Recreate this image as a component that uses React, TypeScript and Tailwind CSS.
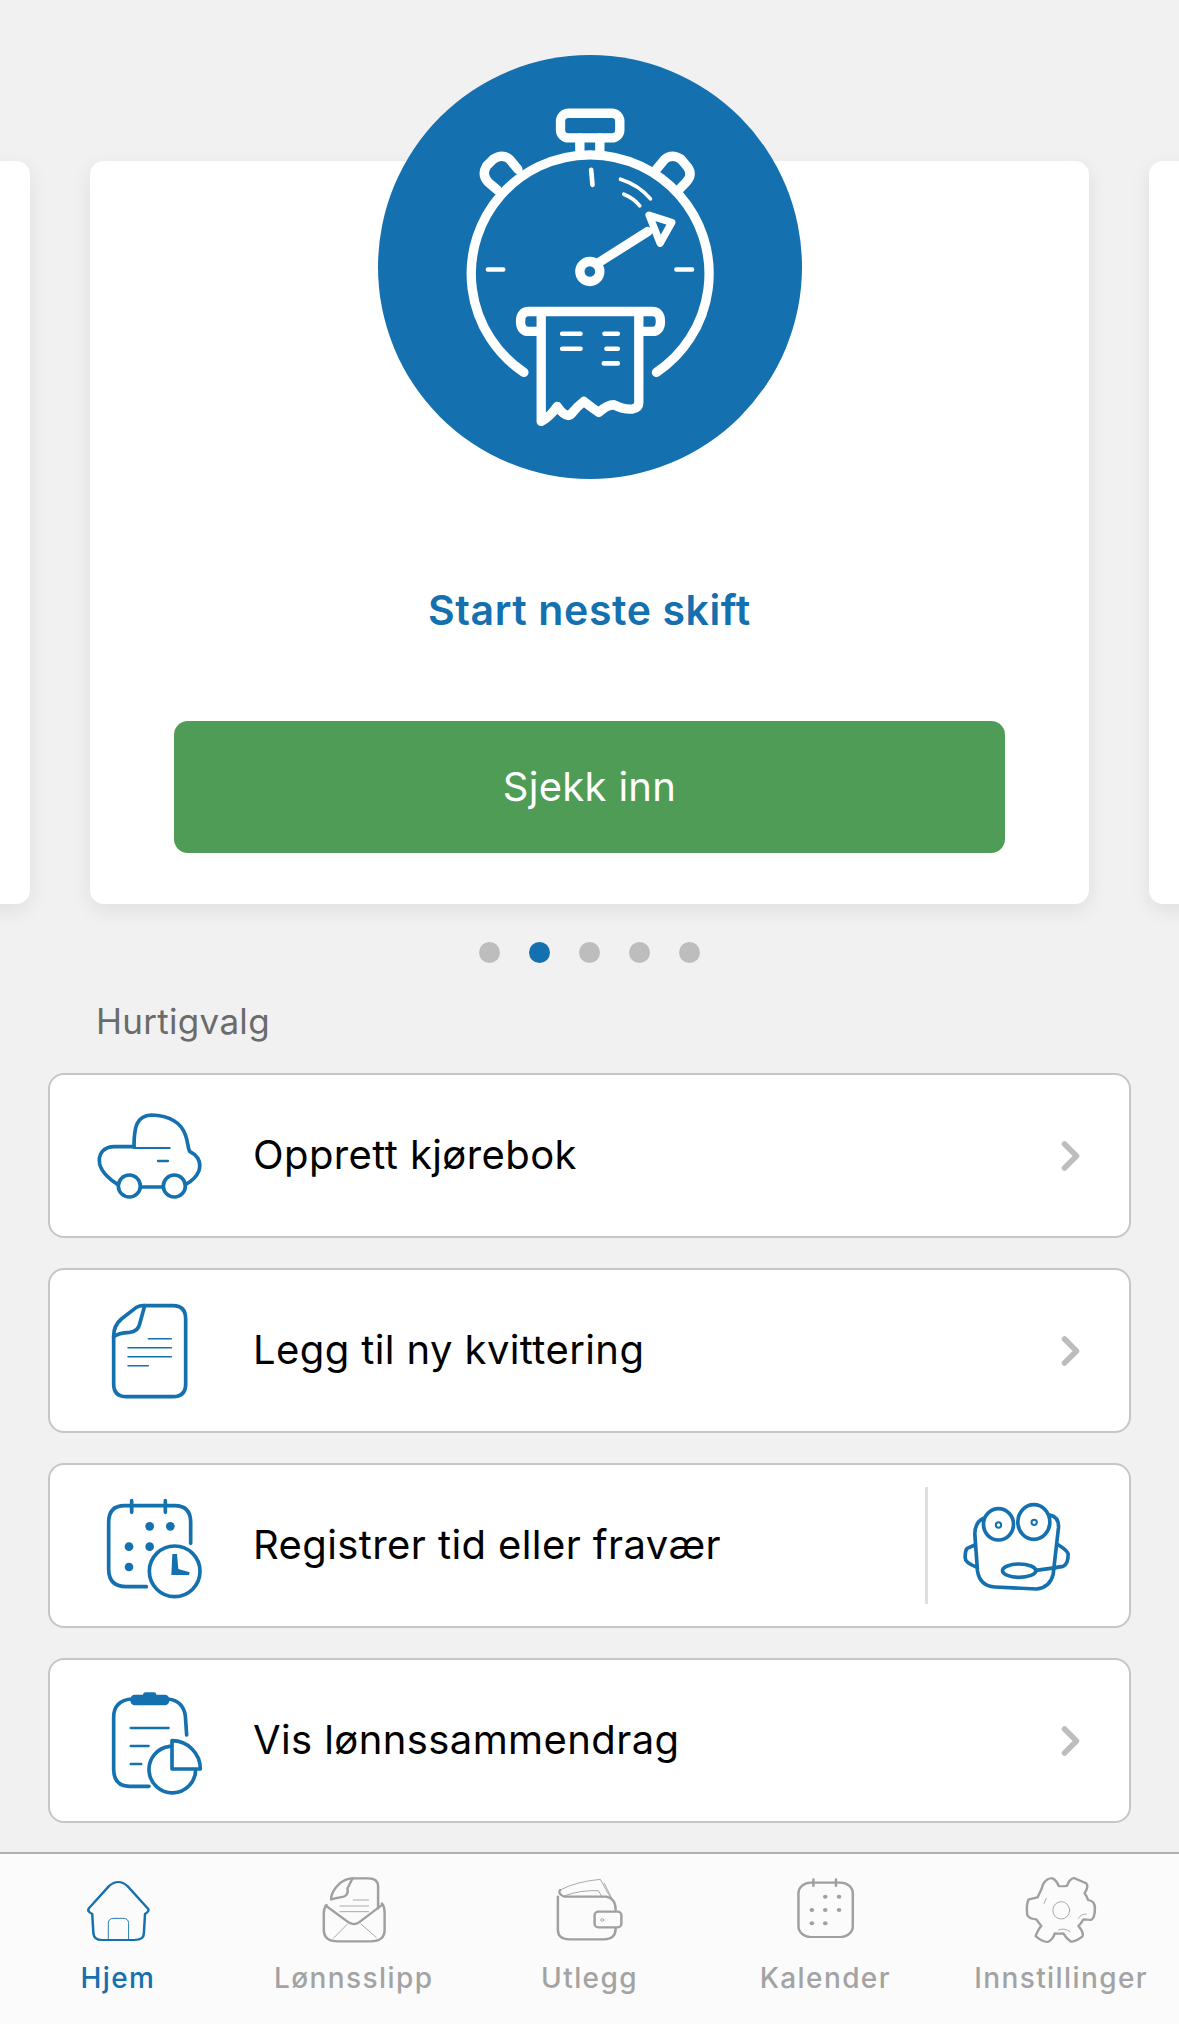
import React from "react";

const BLUE = "#1470ae";
const GREY = "#a0a0a0";

const Stopwatch = () => (
  <svg viewBox="52 45 1273 1273" className="w-[424px] h-[424px]" fill="none" stroke="white" strokeWidth={28} strokeLinecap="round" strokeLinejoin="round">
    <rect x="600" y="220" width="178" height="74" rx="24" />
    <path d="M658 294V335M718 294V335" />
    <path d="M490 998A357 357 0 1 1 888 998" />
    <path d="M472 388L447 358Q425 340 398 358L378 378Q362 405 383 427L410 450" />
    <path d="M888 388L913 358Q935 340 962 358L982 382Q998 405 977 427L955 450" />
    <path d="M692 390L696 435M382 689H428M948 689H995" strokeWidth={14} />
    <path d="M780 418Q835 435 870 477M790 463Q820 475 838 498" strokeWidth={11} />
    <circle cx="688" cy="695" r="30" />
    <path d="M712 670L862 575" />
    <path d="M866 526L934 548L899 610Z" strokeWidth={22} />
    <path d="M530 875H505Q480 875 480 845Q480 815 505 815H875Q900 815 900 845Q900 875 875 875H850" />
    <path d="M542 820V1145Q565 1135 590 1100Q615 1135 630 1125Q650 1100 670 1085Q695 1105 715 1118Q740 1095 760 1095Q790 1110 815 1108Q835 1105 835 1090V820" />
    <path d="M605 882H660M732 882H772M605 927H660M738 927H772M730 971H772" strokeWidth={14} />
  </svg>
);

// row icons are traced at 3x, all with the same box
const RowIcon = ({ children }: { children: React.ReactNode }) => (
  <svg viewBox="130 106 360 360" className="w-[120px] h-[120px] shrink-0 ml-[33px]" fill="none" stroke={BLUE} strokeWidth={11} strokeLinecap="round" strokeLinejoin="round">
    {children}
  </svg>
);

const CarIcon = () => (
  <RowIcon>
    <path d="M283 258C283 200 290 165 335 163C390 165 425 185 438 225C445 245 445 265 450 272C475 285 485 305 478 330C470 350 455 362 440 370" />
    <path d="M283 258H225C190 258 175 280 180 310C185 335 215 360 235 372" />
    <path d="M283 262H390" strokeWidth={6} />
    <path d="M355 301H385" strokeWidth={7} />
    <circle cx="269" cy="376" r="33" />
    <circle cx="404" cy="376" r="33" />
    <path d="M303 379H369" />
  </RowIcon>
);

const DocIcon = () => (
  <RowIcon>
    <path d="M310 150H400Q438 150 438 190V385Q438 423 400 423H260Q222 423 222 385V240Q222 210 245 190L290 155Q300 150 310 150Z" />
    <path d="M222 243Q235 232 270 230Q295 228 300 205L315 150" />
    <path d="M326 249H395M265 276H395M265 303H395M265 330H326" strokeWidth={4.5} />
  </RowIcon>
);

const CalendarClockIcon = () => (
  <RowIcon>
    <path d="M453 278V215Q453 165 405 165H255Q207 165 207 215V355Q207 408 260 408H320" />
    <path d="M276 150V185M377 150V185" />
    <g fill={BLUE} stroke="none">
      <circle cx="330" cy="227" r="13" />
      <circle cx="392" cy="227" r="13" />
      <circle cx="268" cy="288" r="13" />
      <circle cx="330" cy="288" r="13" />
      <circle cx="268" cy="349" r="13" />
      <path d="M398 310L412 310L416 355L450 365L448 373L395 373Z" />
    </g>
    <circle cx="405" cy="362" r="76" />
  </RowIcon>
);

const ClipboardIcon = () => (
  <RowIcon>
    <path d="M441 268L437 210Q430 165 385 160M275 160Q222 165 222 215V370Q222 422 270 422H328" />
    <g fill={BLUE} stroke="none">
      <rect x="272" y="147" width="117" height="32" rx="14" />
      <rect x="310" y="140" width="40" height="20" rx="8" />
    </g>
    <path d="M273 247H387M273 301H327M273 355H305" strokeWidth={7} />
    <path d="M390 302A70 70 0 1 0 468 372" />
    <path d="M397 285V370H482A85 85 0 0 0 397 285Z" />
  </RowIcon>
);

const RobotIcon = () => (
  <svg viewBox="250 180 320 270" className="w-[107px] h-[90px] shrink-0 ml-[35px]" fill="none" stroke={BLUE} strokeWidth={11} strokeLinecap="round" strokeLinejoin="round">
    <path d="M310 232Q285 245 285 280L293 390Q300 435 345 438L470 444Q510 440 520 400L536 260Q538 228 510 222" />
    <ellipse cx="356" cy="250" rx="45" ry="47" />
    <ellipse cx="462" cy="243" rx="48" ry="52" />
    <circle cx="356" cy="252" r="8" strokeWidth={6} />
    <circle cx="463" cy="244" r="8" strokeWidth={6} />
    <path d="M285 312L262 322Q256 328 256 350Q256 365 290 378" />
    <path d="M536 312Q565 330 565 340Q565 370 550 376L525 380" />
    <ellipse cx="418" cy="389" rx="50" ry="20" />
    <path d="M468 388L528 380" />
  </svg>
);

const Chevron = () => (
  <svg viewBox="0 0 19 32" className="w-[19px] h-[32px] shrink-0 ml-auto mr-[49px]" fill="none" stroke="#bdbdbd" strokeWidth={5.5} strokeLinecap="round" strokeLinejoin="round">
    <path d="M3.5 4L15.5 16L3.5 28" />
  </svg>
);

// tab icons: 200x210 box of the traced crop, squeezed to real pixels
const TabIcon = ({ x, color, children }: { x: number; color: string; children: React.ReactNode }) => (
  <svg viewBox={`${x} 105 200 210`} preserveAspectRatio="none" className="w-[76.5px] h-[70px]" fill="none" stroke={color} strokeWidth={6.5} strokeLinecap="round" strokeLinejoin="round">
    {children}
  </svg>
);

const tabs = [
  {
    label: "Hjem",
    x: 208,
    icon: (
      <>
        <path d="M240 222L243 280Q245 300 265 300H350Q375 300 375 280L378 222Q392 212 385 205L332 138Q320 126 308 126Q296 126 284 138L231 205Q226 215 240 222Z" />
        <path d="M282 298V250Q282 235 297 235H320Q335 235 335 250V298" strokeWidth={2.5} />
      </>
    ),
  },
  {
    label: "Lønnsslipp",
    x: 820,
    icon: (
      <>
        <path d="M850 195Q843 205 843 220V270Q843 304 880 304H965Q1002 304 1002 270V220Q1002 200 995 190" />
        <path d="M848 197L905 245Q920 258 935 247L995 195" />
        <path d="M862 178Q862 155 885 130Q900 115 920 115H960Q985 115 985 140V205" />
        <path d="M862 178Q885 172 895 170Q908 165 905 145L918 115" />
        <path d="M920 180H960M885 198H960M885 215H960M868 295L905 252M980 292L940 252" strokeWidth={2.5} />
      </>
    ),
  },
  {
    label: "Utlegg",
    x: -74,
    icon: (
      <>
        <path d="M-56 170V270Q-56 298-25 298H65Q95 298 95 265" />
        <path d="M-50 150Q-58 160-40 170H70Q95 175 95 210" />
        <rect x="40" y="215" width="70" height="47" rx="10" />
        <circle cx="60" cy="240" r="4" strokeWidth={2.5} />
        <path d="M-50 150Q-10 125 55 118L85 180M-40 168Q0 150 50 152L60 172M65 130L85 175" strokeWidth={2.5} />
      </>
    ),
  },
  {
    label: "Kalender",
    x: 540,
    icon: (
      <>
        <rect x="570" y="128" width="142" height="163" rx="32" />
        <path d="M609 118V138M668 118V138" />
        <g fill={GREY} stroke="none">
          <circle cx="640" cy="170" r="6" />
          <circle cx="676" cy="170" r="6" />
          <circle cx="605" cy="210" r="6" />
          <circle cx="640" cy="210" r="6" />
          <circle cx="676" cy="210" r="6" />
          <circle cx="605" cy="250" r="6" />
          <circle cx="640" cy="250" r="6" />
        </g>
      </>
    ),
  },
  {
    label: "Innstillinger",
    x: 1157,
    icon: (
      <>
        <path d="M1205 148Q1210 118 1232 114Q1245 120 1250 138Q1262 140 1272 137Q1278 118 1290 114L1322 130Q1330 138 1318 160Q1325 170 1327 180Q1345 182 1345 205Q1345 235 1335 240L1315 238Q1308 252 1302 258Q1318 280 1312 290Q1295 305 1282 305Q1270 295 1262 280Q1250 282 1240 280Q1235 300 1222 306Q1205 305 1190 288Q1198 265 1205 258Q1198 248 1192 238Q1175 238 1168 225Q1165 190 1172 178L1195 172Q1200 160 1205 148Z" />
        <ellipse cx="1257" cy="211" rx="22" ry="26" strokeWidth={2.5} />
        <path d="M1218 175L1212 190M1322 222Q1308 222 1302 235M1250 270Q1265 262 1280 275" strokeWidth={2.5} />
      </>
    ),
  },
];

const Row = ({ icon, label, right }: { icon: React.ReactNode; label: string; right?: React.ReactNode }) => (
  <div className="h-[165px] flex items-center bg-white border-2 border-[#c6c6c6] rounded-[16px]">
    {icon}
    <span className="ml-[50px] mb-[2px] text-[40px] tracking-[0.4px] text-black">{label}</span>
    {right ?? <Chevron />}
  </div>
);

export default function App() {
  return (
    <div className="w-[1179px] h-[2024px] flex flex-col bg-[#f1f1f1] overflow-hidden [font-family:Inter,sans-serif]">
      <div className="flex-1 pt-[161px]">
        {/* carousel */}
        <div className="flex justify-center gap-[60px]">
          <div className="w-[999px] h-[743px] shrink-0 bg-white rounded-[14px] shadow-[0_6px_20px_rgba(0,0,0,0.08)]" />
          <div className="relative w-[999px] h-[743px] shrink-0 flex flex-col items-center pt-[425px] bg-white rounded-[14px] shadow-[0_6px_20px_rgba(0,0,0,0.08)]">
            <div className="absolute -top-[106px] left-1/2 -translate-x-1/2 w-[424px] h-[424px] rounded-full bg-[#1470ae]">
              <Stopwatch />
            </div>
            <div className="h-[48px] leading-[48px] text-[41px] tracking-[0.6px] font-semibold text-[#1470ae]">Start neste skift</div>
            <button className="mt-[87px] w-[831px] h-[132px] rounded-[14px] bg-[#4f9c56] text-white text-[40px] tracking-[0.3px]">Sjekk inn</button>
          </div>
          <div className="w-[999px] h-[743px] shrink-0 bg-white rounded-[14px] shadow-[0_6px_20px_rgba(0,0,0,0.08)]" />
        </div>

        {/* dots */}
        <div className="mt-[38px] flex justify-center gap-[29px]">
          <div className="w-[21px] h-[21px] rounded-full bg-[#bdbdbd]" />
          <div className="w-[21px] h-[21px] rounded-full bg-[#1470ae]" />
          <div className="w-[21px] h-[21px] rounded-full bg-[#bdbdbd]" />
          <div className="w-[21px] h-[21px] rounded-full bg-[#bdbdbd]" />
          <div className="w-[21px] h-[21px] rounded-full bg-[#bdbdbd]" />
        </div>

        <div className="mt-[34px] ml-[96px] h-[48px] leading-[48px] text-[35px] tracking-[0.3px] text-[#6b6b6b]">Hurtigvalg</div>

        <div className="mt-[28px] mx-[48px] flex flex-col gap-[30px]">
          <Row icon={<CarIcon />} label="Opprett kjørebok" />
          <Row icon={<DocIcon />} label="Legg til ny kvittering" />
          <Row
            icon={<CalendarClockIcon />}
            label="Registrer tid eller fravær"
            right={
              <div className="ml-auto w-[204px] h-[117px] flex items-center border-l-[3px] border-[#dedede]">
                <RobotIcon />
              </div>
            }
          />
          <Row icon={<ClipboardIcon />} label="Vis lønnssammendrag" />
        </div>
      </div>

      {/* tab bar */}
      <div className="h-[172px] shrink-0 grid grid-cols-5 bg-[#fbfbfb] border-t-2 border-[#b0b0b0] pt-[21px]">
        {tabs.map((t, i) => (
          <div key={t.label} className="flex flex-col items-center">
            <TabIcon x={t.x} color={i === 0 ? BLUE : GREY}>
              {t.icon}
            </TabIcon>
            <span className={`mt-[15px] leading-[36px] text-[28px] tracking-[1.4px] font-medium whitespace-nowrap ${i === 0 ? "text-[#1470ae]" : "text-[#a3a3a3]"}`}>
              {t.label}
            </span>
          </div>
        ))}
      </div>
    </div>
  );
}
